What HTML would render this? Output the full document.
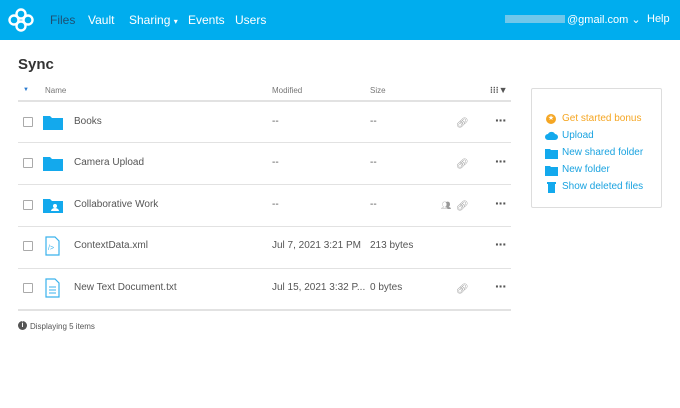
<!DOCTYPE html><html><head><style>
body{margin:0;width:680px;height:408px;background:#fff;font-family:"Liberation Sans",sans-serif;position:relative;overflow:hidden;color:#444}
.hd{position:absolute;left:0;top:0;width:680px;height:40px;background:#00adee}
.hd span{position:absolute;top:13px;font-size:12px;color:#fff;white-space:nowrap}
.a{position:absolute}
.line{position:absolute;left:18px;width:493px;height:1px;background:#e2e2e2}
.cb{position:absolute;left:23px;width:8px;height:8px;border:1px solid #aaa;border-radius:1px}
.t{position:absolute;font-size:10px;color:#555;white-space:nowrap}
.d{position:absolute;left:495px;font-size:14px;font-weight:bold;color:#555;line-height:6px;letter-spacing:-1px}
.s{position:absolute;font-size:10px;color:#1aa3e0;left:562px}
</style></head><body>
<div class="hd">
<svg class="a" style="left:8px;top:8px" width="26" height="24" viewBox="0 0 26 24"><g fill="none" stroke="#fff" stroke-width="2.4"><circle cx="13" cy="6" r="4.5"/><circle cx="13" cy="18" r="4.5"/><circle cx="6" cy="12" r="4.5"/><circle cx="20" cy="12" r="4.5"/></g></svg>
<span style="left:50px;color:#1d4f73">Files</span><span style="left:88px">Vault</span><span style="left:129px">Sharing <small style="font-size:8px">▾</small></span><span style="left:188px">Events</span><span style="left:235px">Users</span>
<div class="a" style="left:505px;top:15px;width:60px;height:8px;background:#8ccde9;opacity:.8"></div>
<span style="left:567px;font-size:11px">@gmail.com ⌄</span><span style="left:647px;font-size:11px">Help</span>
</div>
<div class="a" style="left:18px;top:56px;font-size:15px;font-weight:bold;color:#333">Sync</div>
<div class="t" style="left:23px;top:87px;font-size:6px;color:#2a7bd0">▼</div>
<div class="t" style="left:45px;top:86px;font-size:8px;color:#777">Name</div>
<div class="t" style="left:272px;top:86px;font-size:8px;color:#777">Modified</div>
<div class="t" style="left:370px;top:86px;font-size:8px;color:#777">Size</div>
<div class="t" style="left:490px;top:85px;font-size:9px;color:#555;font-weight:bold">⁝⁝⁝▼</div>
<div class="line" style="top:100px;height:2px"></div>
<div class="line" style="top:142px"></div><div class="line" style="top:184px"></div><div class="line" style="top:226px"></div><div class="line" style="top:268px"></div><div class="line" style="top:309px;height:2px"></div>

<div class="cb" style="top:117px"></div><div class="cb" style="top:158px"></div><div class="cb" style="top:200px"></div><div class="cb" style="top:241px"></div><div class="cb" style="top:283px"></div>
<svg class="a" style="left:43px;top:114px" width="20" height="16"><path d="M0 2h7l2 2h11v12H0z" fill="#13a9ed"/></svg>
<svg class="a" style="left:43px;top:155px" width="20" height="16"><path d="M0 2h7l2 2h11v12H0z" fill="#13a9ed"/></svg>
<svg class="a" style="left:43px;top:197px" width="20" height="16"><path d="M0 2h7l2 2h11v12H0z" fill="#13a9ed"/><circle cx="12" cy="9" r="2" fill="#fff"/><path d="M8 14a4 3 0 0 1 8 0z" fill="#fff"/></svg>
<svg class="a" style="left:45px;top:236px" width="15" height="20"><path d="M1 1h9l4 4v14H1z" fill="#fff" stroke="#3ab2ec" stroke-width="1.2"/><text x="3" y="14" font-size="7" fill="#3ab2ec" font-family="Liberation Sans">/&gt;</text></svg>
<svg class="a" style="left:45px;top:278px" width="15" height="20"><path d="M1 1h9l4 4v14H1z" fill="#fff" stroke="#3ab2ec" stroke-width="1.2"/><path d="M4 9h7M4 12h7M4 15h7" stroke="#3ab2ec"/></svg>
<div class="t" style="left:74px;top:116px">Books</div><div class="t" style="left:74px;top:157px">Camera Upload</div><div class="t" style="left:74px;top:199px">Collaborative Work</div><div class="t" style="left:74px;top:240px">ContextData.xml</div><div class="t" style="left:74px;top:282px">New Text Document.txt</div>
<div class="t" style="left:272px;top:116px">--</div><div class="t" style="left:272px;top:157px">--</div><div class="t" style="left:272px;top:199px">--</div><div class="t" style="left:272px;top:240px">Jul 7, 2021 3:21 PM</div><div class="t" style="left:272px;top:282px">Jul 15, 2021 3:32 P...</div>
<div class="t" style="left:370px;top:116px">--</div><div class="t" style="left:370px;top:157px">--</div><div class="t" style="left:370px;top:199px">--</div><div class="t" style="left:370px;top:240px">213 bytes</div><div class="t" style="left:370px;top:282px">0 bytes</div>
<div class="t" style="left:456px;top:118px;color:#999">🔗︎</div><div class="t" style="left:456px;top:159px;color:#999">🔗︎</div><div class="t" style="left:441px;top:201px;color:#999;font-size:8px">👥︎</div><div class="t" style="left:456px;top:201px;color:#999">🔗︎</div><div class="t" style="left:456px;top:284px;color:#999">🔗︎</div>
<div class="d" style="top:117px">···</div><div class="d" style="top:158px">···</div><div class="d" style="top:200px">···</div><div class="d" style="top:241px">···</div><div class="d" style="top:283px">···</div>
<div class="a" style="left:18px;top:321px;width:9px;height:9px;border-radius:50%;background:#555;color:#fff;font-size:7px;text-align:center;line-height:9px;font-weight:bold">i</div>
<div class="t" style="left:30px;top:322px;font-size:8px">Displaying 5 items</div>
<div class="a" style="left:531px;top:88px;width:129px;height:118px;border:1px solid #ddd;border-radius:2px"></div>
<div class="a" style="left:546px;top:114px;width:10px;height:10px;border-radius:50%;background:#f5a623;color:#fff;font-size:7px;text-align:center;line-height:10px">★</div>
<svg class="a" style="left:545px;top:131px" width="13" height="10"><path d="M3 9a3 3 0 0 1 0-6 4 4 0 0 1 7 0 3 3 0 0 1 0 6z" fill="#13a9ed"/></svg>
<svg class="a" style="left:545px;top:148px" width="13" height="11"><path d="M0 1h5l1 1h7v9H0z" fill="#13a9ed"/></svg>
<svg class="a" style="left:545px;top:165px" width="13" height="11"><path d="M0 1h5l1 1h7v9H0z" fill="#13a9ed"/></svg>
<svg class="a" style="left:547px;top:181px" width="9" height="12"><path d="M0 1h9v2H0zM1 3h7v9H1z" fill="#13a9ed"/></svg>
<div class="s" style="top:113px;color:#f5a623">Get started bonus</div><div class="s" style="top:130px">Upload</div><div class="s" style="top:147px">New shared folder</div><div class="s" style="top:164px">New folder</div><div class="s" style="top:181px">Show deleted files</div>
</body></html>
